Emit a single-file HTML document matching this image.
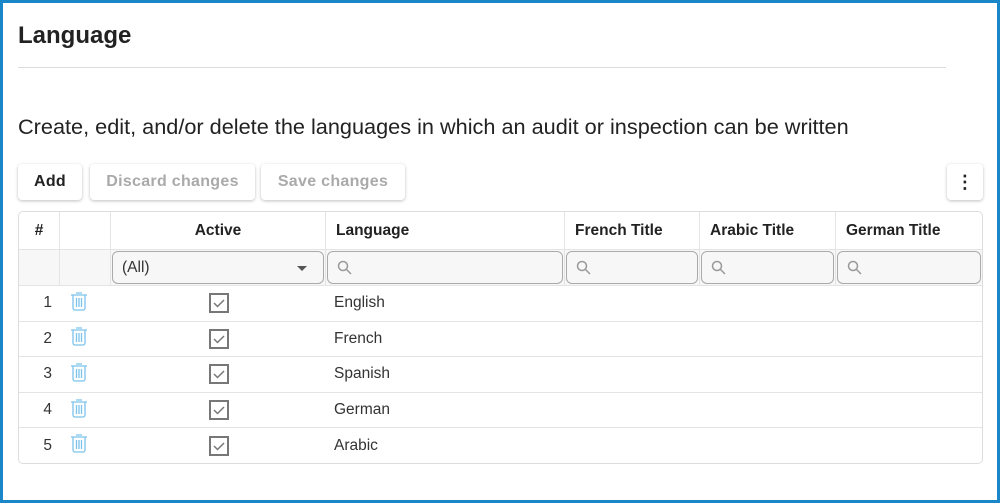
<!DOCTYPE html><html><head><style>
body{margin:0;width:1000px;height:503px;overflow:hidden;font-family:"Liberation Sans",sans-serif;background:#fff}
.frame{position:absolute;left:0;top:0;width:994px;height:497px;border:3px solid #1a86c8}
.a{position:absolute}
h1{position:absolute;left:18px;top:22px;margin:0;font-size:24px;font-weight:bold;color:#222}
.hr{left:18px;top:67px;width:928px;height:1px;background:#ddd}
.desc{left:18px;top:114px;font-size:21.7px;color:#222}
.btn{top:164px;height:36px;border-radius:4px;box-shadow:0 1px 3px rgba(0,0,0,.25);font-size:16px;font-weight:bold;line-height:36px;text-align:center;letter-spacing:.3px}
table{position:absolute;left:18px;top:211px;width:965px;border-collapse:separate;border-spacing:0;border:1px solid #ddd;border-radius:5px;font-size:15.5px;color:#333}
td{padding:0;border-right:1px solid #e4e4e4;border-bottom:1px solid #e4e4e4;height:34.6px}
td:last-child{border-right:none}
tr:last-child td{border-bottom:none}
tr.h td{height:37px;font-weight:bold;color:#222;padding-left:10px}
tr.f td{background:#f7f7f7;height:35px;padding:0 1px}
.inp{height:31px;border:1px solid #aaa;border-radius:6px;background:#f7f7f7;position:relative}
tr.d td{border-right:none}
.cb{display:inline-block;width:16px;height:16px;border:2px solid #777;vertical-align:middle}
</style></head><body>
<div class="frame"></div>
<h1>Language</h1>
<div class="a hr"></div>
<div class="a desc">Create, edit, and/or delete the languages in which an audit or inspection can be written</div>
<div class="a btn" style="left:18px;width:64px;color:#222">Add</div>
<div class="a btn" style="left:90px;width:165px;color:#aaa">Discard changes</div>
<div class="a btn" style="left:261px;width:144px;color:#aaa">Save changes</div>
<div class="a btn" style="left:947px;width:36px;font-size:18px;color:#222">⋮</div>
<table>
<colgroup><col style="width:41px"><col style="width:51px"><col style="width:215px"><col style="width:239px"><col style="width:135px"><col style="width:136px"><col></colgroup>
<tr class="h"><td style="text-align:center;padding:0">#</td><td></td><td style="text-align:center;padding:0">Active</td><td>Language</td><td>French Title</td><td>Arabic Title</td><td>German Title</td></tr>
<tr class="f"><td></td><td></td><td><div class="inp" style="line-height:31px;padding-left:9px;color:#333">(All)<span style="position:absolute;right:16px;top:14px;border:5px solid transparent;border-top-color:#555;border-bottom:0"></span></div></td>
<td><div class="inp"><svg class="a" style="left:9px;top:8px" width="16" height="16" viewBox="0 0 16 16"><circle cx="6" cy="6" r="4.5" fill="none" stroke="#999" stroke-width="1.5"/><path d="M9.5 9.5 14 14" stroke="#999" stroke-width="1.5"/></svg></div></td>
<td><div class="inp"><svg class="a" style="left:9px;top:8px" width="16" height="16" viewBox="0 0 16 16"><circle cx="6" cy="6" r="4.5" fill="none" stroke="#999" stroke-width="1.5"/><path d="M9.5 9.5 14 14" stroke="#999" stroke-width="1.5"/></svg></div></td>
<td><div class="inp"><svg class="a" style="left:9px;top:8px" width="16" height="16" viewBox="0 0 16 16"><circle cx="6" cy="6" r="4.5" fill="none" stroke="#999" stroke-width="1.5"/><path d="M9.5 9.5 14 14" stroke="#999" stroke-width="1.5"/></svg></div></td>
<td><div class="inp"><svg class="a" style="left:9px;top:8px" width="16" height="16" viewBox="0 0 16 16"><circle cx="6" cy="6" r="4.5" fill="none" stroke="#999" stroke-width="1.5"/><path d="M9.5 9.5 14 14" stroke="#999" stroke-width="1.5"/></svg></div></td></tr>
<tr class="d"><td style="text-align:right;padding-right:8px">1</td><td style="padding-left:10px"><svg width="18" height="20" viewBox="0 0 18 20"><path d="M6 2h6M1 4h16M3 4v13a2 2 0 0 0 2 2h8a2 2 0 0 0 2-2V4M6.5 7v9M9 7v9M11.5 7v9" fill="none" stroke="#7cc4ec" stroke-width="1.3"/></svg></td><td style="text-align:center"><span class="cb"><svg width="16" height="16"><path d="M3 8l3.5 3.5L13 5" fill="none" stroke="#777" stroke-width="1.5"/></svg></span></td><td style="padding-left:8px">English</td><td></td><td></td><td></td></tr>
<tr class="d"><td style="text-align:right;padding-right:8px">2</td><td style="padding-left:10px"><svg width="18" height="20" viewBox="0 0 18 20"><path d="M6 2h6M1 4h16M3 4v13a2 2 0 0 0 2 2h8a2 2 0 0 0 2-2V4M6.5 7v9M9 7v9M11.5 7v9" fill="none" stroke="#7cc4ec" stroke-width="1.3"/></svg></td><td style="text-align:center"><span class="cb"><svg width="16" height="16"><path d="M3 8l3.5 3.5L13 5" fill="none" stroke="#777" stroke-width="1.5"/></svg></span></td><td style="padding-left:8px">French</td><td></td><td></td><td></td></tr>
<tr class="d"><td style="text-align:right;padding-right:8px">3</td><td style="padding-left:10px"><svg width="18" height="20" viewBox="0 0 18 20"><path d="M6 2h6M1 4h16M3 4v13a2 2 0 0 0 2 2h8a2 2 0 0 0 2-2V4M6.5 7v9M9 7v9M11.5 7v9" fill="none" stroke="#7cc4ec" stroke-width="1.3"/></svg></td><td style="text-align:center"><span class="cb"><svg width="16" height="16"><path d="M3 8l3.5 3.5L13 5" fill="none" stroke="#777" stroke-width="1.5"/></svg></span></td><td style="padding-left:8px">Spanish</td><td></td><td></td><td></td></tr>
<tr class="d"><td style="text-align:right;padding-right:8px">4</td><td style="padding-left:10px"><svg width="18" height="20" viewBox="0 0 18 20"><path d="M6 2h6M1 4h16M3 4v13a2 2 0 0 0 2 2h8a2 2 0 0 0 2-2V4M6.5 7v9M9 7v9M11.5 7v9" fill="none" stroke="#7cc4ec" stroke-width="1.3"/></svg></td><td style="text-align:center"><span class="cb"><svg width="16" height="16"><path d="M3 8l3.5 3.5L13 5" fill="none" stroke="#777" stroke-width="1.5"/></svg></span></td><td style="padding-left:8px">German</td><td></td><td></td><td></td></tr>
<tr class="d"><td style="text-align:right;padding-right:8px">5</td><td style="padding-left:10px"><svg width="18" height="20" viewBox="0 0 18 20"><path d="M6 2h6M1 4h16M3 4v13a2 2 0 0 0 2 2h8a2 2 0 0 0 2-2V4M6.5 7v9M9 7v9M11.5 7v9" fill="none" stroke="#7cc4ec" stroke-width="1.3"/></svg></td><td style="text-align:center"><span class="cb"><svg width="16" height="16"><path d="M3 8l3.5 3.5L13 5" fill="none" stroke="#777" stroke-width="1.5"/></svg></span></td><td style="padding-left:8px">Arabic</td><td></td><td></td><td></td></tr>
</table>
</body></html>
